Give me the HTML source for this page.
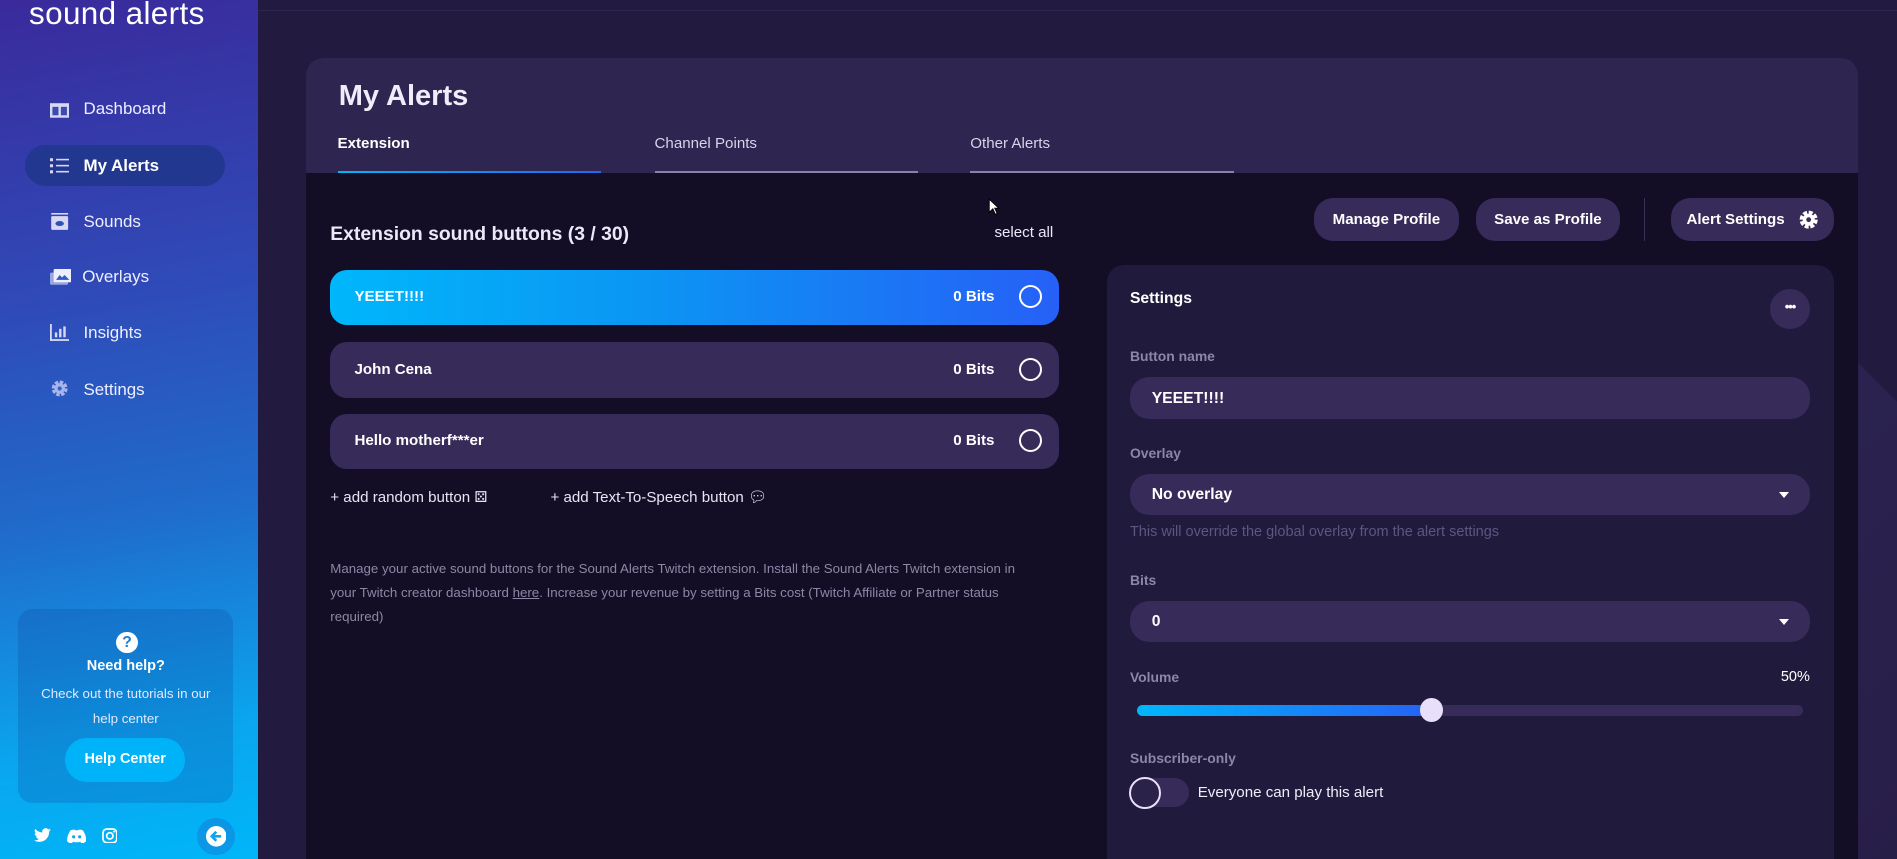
<!DOCTYPE html>
<html><head><meta charset="utf-8"><style>
*{box-sizing:border-box;margin:0;padding:0}
html,body{width:1897px;height:859px;overflow:hidden;background:#221a3d}
#w{zoom:1.2098;width:1568px;height:710px;position:relative;font-family:"Liberation Sans",sans-serif;color:#fff;overflow:hidden;background:#231b3f}
.abs{position:absolute}
#side{left:0;top:0;width:213px;height:710px;background:linear-gradient(170deg,#3a2a9c 0%,#2f4bb8 35%,#1f6ccc 60%,#0aa6ef 85%,#00b6f8 100%)}
.nav{position:absolute;left:69px;font-size:14px;color:#eef}
.ic{position:absolute;left:41px;width:16px;height:14px}
#card{left:253px;top:48px;width:1283px;height:662px;border-radius:14px 14px 0 0;background:#130e26;overflow:hidden}
#hdr{left:0;top:0;width:1283px;height:95px;background:#2e2550}
.tab{position:absolute;top:64px;font-size:12.5px;color:#d8d3e8}
.ul{position:absolute;top:93px;height:2px;width:218px;background:#8a80a8}
.row{position:absolute;left:20px;width:602px;height:46px;border-radius:14px;background:#372b5a;font-size:12.5px;font-weight:bold}
.row .n{position:absolute;left:20px;top:15px}
.row .b{position:absolute;right:53px;top:15px}
.row .c{position:absolute;right:14px;top:13px;width:19px;height:19px;border:2px solid #fff;border-radius:50%}
.btn{position:absolute;top:116px;height:35px;border-radius:16px;background:#372b5a;font-size:12.5px;font-weight:bold;text-align:center;line-height:37px}
.lbl{position:absolute;left:19px;font-size:11.5px;font-weight:bold;color:#8e86a8}
.inp{position:absolute;left:19px;width:562px;height:34px;border-radius:16px;background:#372b5a;font-size:13px;font-weight:bold;padding:10px 18px}
.arr{position:absolute;right:17px;top:15px;border-left:4.5px solid transparent;border-right:4.5px solid transparent;border-top:5px solid #fff}
</style></head><body><div id="w">
<div class="abs" style="left:213px;top:8px;width:1355px;height:1px;background:#2d2550"></div>
<div class="abs" style="left:1536px;top:300px;width:40px;height:420px;background:linear-gradient(135deg,#2b2250 0%,#271e48 100%);clip-path:polygon(0 0,100% 40px,100% 100%,0 100%)"></div>
<div id="side" class="abs">
<div class="abs" style="left:24px;top:-3px;font-size:26px;letter-spacing:0.3px;color:#fff">sound alerts</div>
<div class="abs" style="left:21px;top:120px;width:165px;height:34px;border-radius:17px;background:#223890"></div>
<svg class="ic" style="top:84px" viewBox="0 0 16 14"><rect x="0" y="1" width="16" height="12" fill="#d8d8f4"/><rect x="2" y="4" width="5" height="7" fill="#3b4bb0"/><rect x="9" y="4" width="5" height="7" fill="#3b4bb0"/></svg>
<div class="nav" style="top:82px">Dashboard</div>
<svg class="ic" style="top:130px" viewBox="0 0 16 14"><g fill="#d8d8f4"><rect x="0" y="1" width="2.5" height="2.5"/><rect x="0" y="6" width="2.5" height="2.5"/><rect x="0" y="11" width="2.5" height="2.5"/><rect x="5" y="1.5" width="11" height="1.3"/><rect x="5" y="6.5" width="11" height="1.3"/><rect x="5" y="11.5" width="11" height="1.3"/></g></svg>
<div class="nav" style="top:129px;font-weight:bold;color:#fff">My Alerts</div>
<svg class="ic" style="top:176px" viewBox="0 0 16 16"><g fill="#d8d8f4"><rect x="0" y="0" width="16" height="1.5"/><rect x="0" y="3" width="16" height="13" rx="1"/></g><ellipse cx="8" cy="10" rx="4" ry="2.4" fill="#2f52b8"/></svg>
<div class="nav" style="top:175px">Sounds</div>
<svg class="ic" style="top:222px;width:18px" viewBox="0 0 18 14"><rect x="0" y="3" width="15" height="10" rx="1" fill="#9aa6e0"/><rect x="3" y="0" width="15" height="11" rx="1" fill="#eef"/><path d="M5 9l3-4 2 2 2-2 4 4z" fill="#2f5cbf"/></svg>
<div class="nav" style="top:221px;left:68px">Overlays</div>
<svg class="ic" style="top:268px" viewBox="0 0 16 14"><g fill="#d8d8f4"><rect x="0" y="0" width="1.5" height="14"/><rect x="0" y="12.5" width="16" height="1.5"/><rect x="4" y="7" width="2" height="4"/><rect x="7.5" y="4" width="2" height="7"/><rect x="11" y="2" width="2" height="9"/></g></svg>
<div class="nav" style="top:267px">Insights</div>
<svg class="ic" style="top:314px" viewBox="0 0 16 16"><circle cx="8" cy="8" r="5.5" fill="none" stroke="#aab4ec" stroke-width="4" stroke-dasharray="3 1.3"/><circle cx="8" cy="8" r="5" fill="#aab4ec"/><circle cx="8" cy="8" r="2" fill="#2a69c8"/></svg>
<div class="nav" style="top:314px">Settings</div>
<div class="abs" style="left:15px;top:503px;width:178px;height:161px;border-radius:12px;background:rgba(20,60,150,0.22)"></div>
<div class="abs" style="left:96px;top:522px;width:18px;height:18px;border-radius:50%;background:#fff;color:#1a7fd0;font-size:13px;font-weight:bold;text-align:center;line-height:18px">?</div>
<div class="abs" style="left:15px;top:544px;width:178px;text-align:center;font-size:12px;font-weight:bold">Need help?</div>
<div class="abs" style="left:25px;top:564px;width:158px;text-align:center;font-size:11px;line-height:20px;color:#e4e8ff">Check out the tutorials in our help center</div>
<div class="abs" style="left:54px;top:610px;width:99px;height:36px;border-radius:18px;background:#00b2f8;text-align:center;line-height:36px;font-size:12px;font-weight:bold">Help Center</div>
<svg class="abs" style="left:28px;top:684px" width="14" height="12" viewBox="0 0 24 20"><path d="M24 2.4a10 10 0 0 1-2.8.8A5 5 0 0 0 23.3.4a10 10 0 0 1-3.1 1.2A4.9 4.9 0 0 0 11.8 6 14 14 0 0 1 1.7.9a4.9 4.9 0 0 0 1.5 6.6 5 5 0 0 1-2.2-.6 4.9 4.9 0 0 0 3.9 4.8 5 5 0 0 1-2.2.1 4.9 4.9 0 0 0 4.600 3.4A9.9 9.9 0 0 1 0 17.2 14 14 0 0 0 7.5 19.4c9.1 0 14-7.5 14-14v-.6A10 10 0 0 0 24 2.4z" fill="#fff"/></svg>
<svg class="abs" style="left:55px;top:685px" width="16" height="12" viewBox="0 0 16 12"><path d="M3 1Q6 0 7 1h2q1-1 4 0 3 4 3 9-2 2-4 2l-1-1.5q-3 1-6 0L4 12Q2 12 0 10q0-5 3-9z" fill="#fff"/><circle cx="5.5" cy="6.5" r="1.3" fill="#0aa6ef"/><circle cx="10.5" cy="6.5" r="1.3" fill="#0aa6ef"/></svg>
<svg class="abs" style="left:84px;top:684px" width="13" height="13" viewBox="0 0 13 13"><rect x="0.8" y="0.8" width="11.4" height="11.4" rx="3.2" fill="none" stroke="#fff" stroke-width="1.4"/><circle cx="6.5" cy="6.5" r="2.6" fill="none" stroke="#fff" stroke-width="1.4"/><circle cx="10" cy="3" r="0.8" fill="#fff"/></svg>
<div class="abs" style="left:163px;top:676px;width:31px;height:31px;border-radius:50%;background:rgba(30,100,200,0.35)"></div>
<svg class="abs" style="left:170px;top:683px" width="17" height="17" viewBox="0 0 17 17"><circle cx="8.5" cy="8.5" r="8.5" fill="#fff"/><path d="M12.5 8.5H5M8.5 4.8L4.8 8.5l3.7 3.7" stroke="#0aa6ef" stroke-width="2.2" fill="none"/></svg>
</div>
<div id="card" class="abs">
<div id="hdr" class="abs">
<div class="abs" style="left:27px;top:18px;font-size:24px;font-weight:bold;color:#f0ecfa">My Alerts</div>
<div class="tab" style="left:26px;font-weight:bold;color:#fff">Extension</div>
<div class="tab" style="left:288px">Channel Points</div>
<div class="tab" style="left:549px">Other Alerts</div>
<div class="ul" style="left:26px;background:linear-gradient(90deg,#00b7f5,#2465f2)"></div>
<div class="ul" style="left:288px"></div>
<div class="ul" style="left:549px"></div>
</div>
<div class="abs" style="left:20px;top:136px;font-size:16px;font-weight:bold;color:#ece8f8">Extension sound buttons (3 / 30)</div>
<div class="abs" style="left:569px;top:137px;font-size:12.5px;color:#ece8f8">select all</div>
<div class="row" style="top:175px;background:linear-gradient(90deg,#00b7fb,#0c94f3 45%,#2660f6)"><span class="n">YEEET!!!!</span><span class="b">0 Bits</span><span class="c"></span></div>
<div class="row" style="top:235px"><span class="n">John Cena</span><span class="b">0 Bits</span><span class="c"></span></div>
<div class="row" style="top:294px"><span class="n">Hello motherf***er</span><span class="b">0 Bits</span><span class="c"></span></div>
<div class="abs" style="left:20px;top:355px;font-size:12.5px;color:#e8e4f4">+ add random button ⚄</div>
<div class="abs" style="left:202px;top:355px;font-size:12.5px;color:#e8e4f4">+ add Text-To-Speech button 💬︎</div>
<div class="abs" style="left:20px;top:412px;width:570px;font-size:11px;line-height:20px;color:#8e86a6">Manage your active sound buttons for the Sound Alerts Twitch extension. Install the Sound Alerts Twitch extension in your Twitch creator dashboard <u>here</u>. Increase your revenue by setting a Bits cost (Twitch Affiliate or Partner status required)</div>
<div class="btn" style="left:833px;width:120px">Manage Profile</div>
<div class="btn" style="left:967px;width:119px">Save as Profile</div>
<div class="abs" style="left:1106px;top:116px;width:1px;height:35px;background:#3a3158"></div>
<div class="btn" style="left:1128px;width:135px;text-align:left;padding-left:13px">Alert Settings<svg style="position:absolute;right:13px;top:10px" width="16" height="16" viewBox="0 0 16 16"><circle cx="8" cy="8" r="5.5" fill="none" stroke="#fff" stroke-width="4" stroke-dasharray="3 1.3"/><circle cx="8" cy="8" r="5" fill="#fff"/><circle cx="8" cy="8" r="2" fill="#372b5a"/></svg></div>
<div class="abs" style="left:662px;top:171px;width:601px;height:560px;border-radius:14px;background:#201a3c">
<div class="abs" style="left:19px;top:21px;font-size:13px;font-weight:bold">Settings</div>
<div class="abs" style="left:548px;top:20px;width:33px;height:33px;border-radius:50%;background:#372b5a;text-align:center;font-size:11px;line-height:30px;font-weight:bold;letter-spacing:-1px">•••</div>
<div class="lbl" style="top:69px">Button name</div>
<div class="inp" style="top:93px">YEEET!!!!</div>
<div class="lbl" style="top:149px">Overlay</div>
<div class="inp" style="top:173px">No overlay<span class="arr"></span></div>
<div class="abs" style="left:19px;top:214px;font-size:12px;color:#5e5680">This will override the global overlay from the alert settings</div>
<div class="lbl" style="top:254px">Bits</div>
<div class="inp" style="top:278px">0<span class="arr"></span></div>
<div class="lbl" style="top:334px">Volume</div>
<div class="abs" style="right:20px;top:334px;font-size:12px">50%</div>
<div class="abs" style="left:25px;top:364px;width:550px;height:9px;border-radius:5px;background:#372b5a"></div>
<div class="abs" style="left:25px;top:364px;width:250px;height:9px;border-radius:5px;background:linear-gradient(90deg,#00b7fb,#2660f6)"></div>
<div class="abs" style="left:259px;top:358px;width:19px;height:20px;border-radius:50%;background:#e8e0fa"></div>
<div class="lbl" style="top:401px">Subscriber-only</div>
<div class="abs" style="left:19px;top:424px;width:49px;height:24px;border-radius:12px;background:#372b5a"></div>
<div class="abs" style="left:18px;top:423px;width:27px;height:27px;border-radius:50%;border:2px solid #e8e0fa;background:#2a2249"></div>
<div class="abs" style="left:75px;top:429px;font-size:12.5px;color:#f0ecfa">Everyone can play this alert</div>
</div>
</div>
<svg class="abs" style="left:817px;top:164px" width="10" height="15" viewBox="0 0 10 15"><path d="M1 1v11l3-3 2 4.5 1.6-.7-2-4.3H9z" fill="#fff" stroke="#000" stroke-width="0.8"/></svg>
</div></body></html>
